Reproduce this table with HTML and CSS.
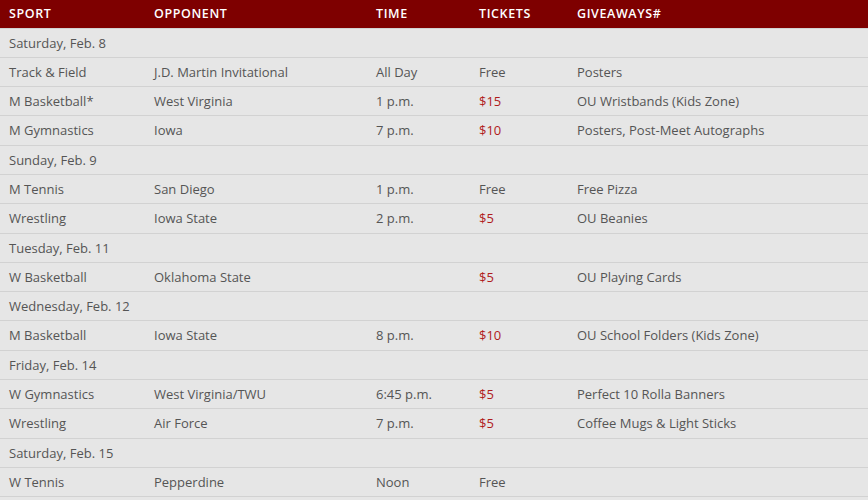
FILE: index.html
```html
<!DOCTYPE html>
<html>
<head>
<meta charset="utf-8">
<link rel="stylesheet" href="styles.css">
</head>
<body>
<table class="schedule">
  <colgroup>
    <col class="c-sport"><col class="c-opp"><col class="c-time"><col class="c-tix"><col class="c-give">
  </colgroup>
  <thead>
    <tr><th>Sport</th><th>Opponent</th><th>Time</th><th>Tickets</th><th>Giveaways#</th></tr>
  </thead>
  <tbody>
    <tr class="date"><td colspan="5">Saturday, Feb. 8</td></tr>
    <tr><td>Track &amp; Field</td><td>J.D. Martin Invitational</td><td>All Day</td><td>Free</td><td>Posters</td></tr>
    <tr><td>M Basketball*</td><td>West Virginia</td><td>1 p.m.</td><td class="price">$15</td><td>OU Wristbands (Kids Zone)</td></tr>
    <tr><td>M Gymnastics</td><td>Iowa</td><td>7 p.m.</td><td class="price">$10</td><td>Posters, Post-Meet Autographs</td></tr>
    <tr class="date"><td colspan="5">Sunday, Feb. 9</td></tr>
    <tr><td>M Tennis</td><td>San Diego</td><td>1 p.m.</td><td>Free</td><td>Free Pizza</td></tr>
    <tr><td>Wrestling</td><td>Iowa State</td><td>2 p.m.</td><td class="price">$5</td><td>OU Beanies</td></tr>
    <tr class="date"><td colspan="5">Tuesday, Feb. 11</td></tr>
    <tr><td>W Basketball</td><td>Oklahoma State</td><td></td><td class="price">$5</td><td>OU Playing Cards</td></tr>
    <tr class="date"><td colspan="5">Wednesday, Feb. 12</td></tr>
    <tr><td>M Basketball</td><td>Iowa State</td><td>8 p.m.</td><td class="price">$10</td><td>OU School Folders (Kids Zone)</td></tr>
    <tr class="date"><td colspan="5">Friday, Feb. 14</td></tr>
    <tr><td>W Gymnastics</td><td>West Virginia/TWU</td><td>6:45 p.m.</td><td class="price">$5</td><td>Perfect 10 Rolla Banners</td></tr>
    <tr><td>Wrestling</td><td>Air Force</td><td>7 p.m.</td><td class="price">$5</td><td>Coffee Mugs &amp; Light Sticks</td></tr>
    <tr class="date"><td colspan="5">Saturday, Feb. 15</td></tr>
    <tr><td>W Tennis</td><td>Pepperdine</td><td>Noon</td><td>Free</td><td></td></tr>
  </tbody>
</table>
</body>
</html>
```
FILE: styles.css
```css
html, body {
  margin: 0;
  padding: 0;
  background: #e6e6e6;
}
body {
  font-family: "Open Sans", "Liberation Sans", sans-serif;
  font-size: 13px;
  color: #555;
}
.schedule {
  width: 868px;
  border-collapse: collapse;
  table-layout: fixed;
}
.c-sport { width: 145px; }
.c-opp { width: 222px; }
.c-time { width: 103px; }
.c-tix { width: 98px; }
.c-give { width: 300px; }
.schedule th {
  background: #7e0000;
  color: #fff;
  text-align: left;
  text-transform: uppercase;
  font-weight: 600;
  font-size: 12.5px;
  letter-spacing: 0.6px;
  height: 28px;
  padding: 0 9px;
  box-sizing: border-box;
  border-bottom: 1px solid #d2d2d2;
}
.schedule td {
  padding: 5px 9px 4px;
  line-height: 19.3px;
  border-bottom: 1px solid #d2d2d2;
  white-space: nowrap;
}
.schedule td.price {
  color: #b01c1c;
}
```
